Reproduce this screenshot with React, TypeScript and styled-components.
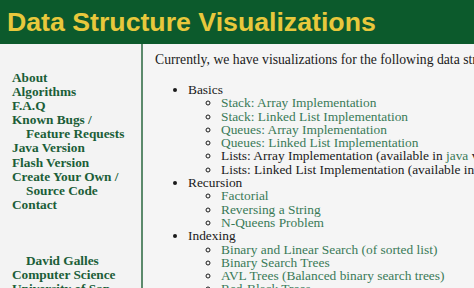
import React from 'react';
import styled, { createGlobalStyle } from 'styled-components';

const GlobalStyle = createGlobalStyle`
    html, body {
        margin: 0;
        padding: 0;
        overflow: hidden;
        background: #f5f5f5;
    }
`

const Header = styled.div`
    background: #0c5a2c;
    height: 44px;
    padding-left: 7px;
    display: flex;
    align-items: center;
`

const Title = styled.h1`
    margin: 0;
    font-family: 'Liberation Sans', Arial, sans-serif;
    font-weight: 700;
    font-size: 26.7px;
    color: #e8c83c;
    white-space: nowrap;
`

const Body = styled.div`
    display: flex;
    height: 244px;
`

const Sidebar = styled.div`
    width: 129px;
    flex-shrink: 0;
    padding: 27px 0 0 12px;
    background: #f3f3f3;
    border-right: 2px solid #5c8a6c;
    display: flex;
    flex-direction: column;
    overflow: hidden;
`

const NavLink = styled.a<{ $indent?: boolean; $wrap?: boolean }>`
    font-family: 'Liberation Serif', 'Times New Roman', serif;
    font-weight: 700;
    font-size: 13.3px;
    line-height: 14.1px;
    color: #1b5e38;
    text-decoration: none;
    white-space: ${p => (p.$wrap ? 'normal' : 'nowrap')};
    padding-left: ${p => (p.$indent ? '14px' : '0')};
`

const Credit = styled.div`
    margin-top: 42px;
    display: flex;
    flex-direction: column;
`

const Main = styled.div`
    flex: 1;
    padding: 9px 0 0 12px;
    white-space: nowrap;
    overflow: hidden;
    font-family: 'Liberation Serif', 'Times New Roman', serif;
    font-size: 13.4px;
    line-height: 13.3px;
    color: #1a1a1a;
`

const Intro = styled.p`
    margin: 0 0 16px 0;
    font-size: 13.7px;
    line-height: 14px;
`

const TopList = styled.ul`
    margin: 0;
    padding-left: 33px;
    list-style: disc;
`

const SubList = styled.ul`
    margin: 0;
    padding-left: 33px;
    list-style: circle;
`

const Item = styled.li``

const Link = styled.a`
    color: #3a7a58;
    text-decoration: none;
`

const sections: { name: string; items: React.ReactNode[] }[] = [
    {
        name: 'Basics',
        items: [
            <Link>Stack: Array Implementation</Link>,
            <Link>Stack: Linked List Implementation</Link>,
            <Link>Queues: Array Implementation</Link>,
            <Link>Queues: Linked List Implementation</Link>,
            <>Lists: Array Implementation (available in <Link>java</Link> version)</>,
            <>Lists: Linked List Implementation (available in <Link>java</Link> version)</>,
        ],
    },
    {
        name: 'Recursion',
        items: [
            <Link>Factorial</Link>,
            <Link>Reversing a String</Link>,
            <Link>N-Queens Problem</Link>,
        ],
    },
    {
        name: 'Indexing',
        items: [
            <Link>Binary and Linear Search (of sorted list)</Link>,
            <Link>Binary Search Trees</Link>,
            <Link>AVL Trees (Balanced binary search trees)</Link>,
            <Link>Red-Black Trees</Link>,
            <Link>Splay Trees</Link>,
        ],
    },
]

export default function App() {
    return (
        <>
            <GlobalStyle />
            <Header>
                <Title>Data Structure Visualizations</Title>
            </Header>
            <Body>
                <Sidebar>
                    <NavLink>About</NavLink>
                    <NavLink>Algorithms</NavLink>
                    <NavLink>F.A.Q</NavLink>
                    <NavLink>Known Bugs /</NavLink>
                    <NavLink $indent>Feature Requests</NavLink>
                    <NavLink>Java Version</NavLink>
                    <NavLink>Flash Version</NavLink>
                    <NavLink>Create Your Own /</NavLink>
                    <NavLink $indent>Source Code</NavLink>
                    <NavLink>Contact</NavLink>
                    <Credit>
                        <NavLink $indent>David Galles</NavLink>
                        <NavLink>Computer Science</NavLink>
                        <NavLink $wrap>University of San Francisco</NavLink>
                    </Credit>
                </Sidebar>
                <Main>
                    <Intro>Currently, we have visualizations for the following data structures and algorithms:</Intro>
                    <TopList>
                        {sections.map(s => (
                            <Item key={s.name}>
                                {s.name}
                                <SubList>
                                    {s.items.map((it, i) => (
                                        <Item key={i}>{it}</Item>
                                    ))}
                                </SubList>
                            </Item>
                        ))}
                    </TopList>
                </Main>
            </Body>
        </>
    );
}
